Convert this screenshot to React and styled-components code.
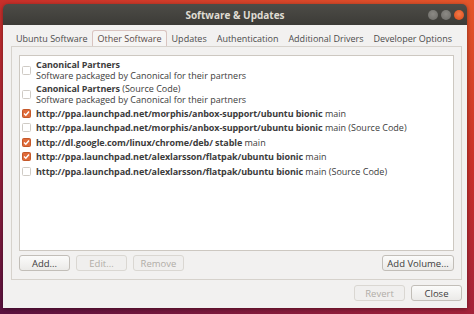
import React from 'react';
import styled, { createGlobalStyle } from 'styled-components';

const GlobalStyle = createGlobalStyle`
  html, body {
    margin: 0;
    padding: 0;
  }
  body {
    width: 474px;
    height: 314px;
    overflow: hidden;
    background: linear-gradient(200deg, #e4562a 0%, #c8302a 35%, #a3223a 65%, #5a1240 100%);
    font-family: "Open Sans", "DejaVu Sans", sans-serif;
  }
`;

const sources = [
  { title: 'Canonical Partners', extra: '', sub: 'Software packaged by Canonical for their partners', checked: false },
  { title: 'Canonical Partners', extra: ' (Source Code)', sub: 'Software packaged by Canonical for their partners', checked: false },
  { url: 'http://ppa.launchpad.net/morphis/anbox-support/ubuntu bionic', rest: ' main', checked: true },
  { url: 'http://ppa.launchpad.net/morphis/anbox-support/ubuntu bionic', rest: ' main (Source Code)', checked: false },
  { url: 'http://dl.google.com/linux/chrome/deb/ stable', rest: ' main', checked: true },
  { url: 'http://ppa.launchpad.net/alexlarsson/flatpak/ubuntu bionic', rest: ' main', checked: true },
  { url: 'http://ppa.launchpad.net/alexlarsson/flatpak/ubuntu bionic', rest: ' main (Source Code)', checked: false },
];

const tabs = ['Ubuntu Software', 'Other Software', 'Updates', 'Authentication', 'Additional Drivers', 'Developer Options'];

function App({ className }) {
  return (
    <Desktop className={className}>
      <GlobalStyle />
      <Window>
        <TitleBar>
          <span />
          <Title>Software &amp; Updates</Title>
          <Controls>
            <Dot />
            <Dot />
            <Dot close />
          </Controls>
        </TitleBar>
        <Content>
          <Tabs>
            {tabs.map(t => (
              <Tab key={t} active={t === 'Other Software'}>
                {t}
              </Tab>
            ))}
          </Tabs>
          <Panel>
            <List>
              {sources.map((s, i) =>
                s.title ? (
                  <Item key={i} tall>
                    <Check checked={s.checked} />
                    <div>
                      <Line>
                        <b>{s.title}</b>
                        {s.extra}
                      </Line>
                      <Line>{s.sub}</Line>
                    </div>
                  </Item>
                ) : (
                  <Item key={i}>
                    <Check checked={s.checked} />
                    <Line>
                      <b>{s.url}</b>
                      {s.rest}
                    </Line>
                  </Item>
                )
              )}
            </List>
            <ButtonRow>
              <Button>Add...</Button>
              <Button disabled>Edit...</Button>
              <Button disabled>Remove</Button>
              <Button wide push>
                Add Volume...
              </Button>
            </ButtonRow>
          </Panel>
          <Footer>
            <Button disabled>Revert</Button>
            <Button>Close</Button>
          </Footer>
        </Content>
      </Window>
    </Desktop>
  );
}

function Check({ checked }) {
  return (
    <Box checked={checked}>
      {checked && (
        <svg width="7" height="7" viewBox="0 0 7 7">
          <path d="M1 3.6 L2.8 5.3 L6 1.5" fill="none" stroke="#fff" strokeWidth="1.4" />
        </svg>
      )}
    </Box>
  );
}

const Desktop = styled.div`
  width: 474px;
  height: 314px;
  box-sizing: border-box;
  padding: 4px 7px 0 3px;
`;

const Window = styled.div`
  width: 464px;
  height: 304px;
  display: flex;
  flex-direction: column;
  border-radius: 5px 5px 0 0;
  overflow: hidden;
  box-shadow: 0 1px 4px rgba(0, 0, 0, 0.4);
`;

const TitleBar = styled.div`
  height: 21px;
  flex: none;
  display: grid;
  grid-template-columns: 1fr auto 1fr;
  align-items: center;
  background: linear-gradient(#4d4c47, #3c3b37);
`;

const Title = styled.span`
  color: #dfdbd2;
  font-size: 10px;
  font-weight: bold;
`;

const Controls = styled.div`
  justify-self: end;
  display: flex;
  gap: 3px;
  padding-right: 3px;
`;

const Dot = styled.span`
  width: 10px;
  height: 10px;
  border-radius: 50%;
  background: ${p => (p.close ? 'radial-gradient(circle at 50% 40%, #f37a4a, #dd4814)' : 'radial-gradient(circle at 50% 40%, #8c8a85, #6b6a66)')};
`;

const Content = styled.div`
  flex: 1;
  display: flex;
  flex-direction: column;
  background: #f2f1f0;
  padding: 5px 5px 0 8px;
  color: #3c3c3c;
`;

const Tabs = styled.div`
  display: flex;
`;

const Tab = styled.div`
  font-size: 9px;
  line-height: 15px;
  padding: 0 4px;
  border: 1px solid ${p => (p.active ? '#d9c4c0' : 'transparent')};
  border-bottom: none;
  border-radius: 3px 3px 0 0;
  color: ${p => (p.active ? '#5a4b48' : '#4c4c4c')};
  background: ${p => (p.active ? '#f6f5f4' : 'transparent')};
  white-space: nowrap;
`;

const Panel = styled.div`
  height: 234px;
  box-sizing: border-box;
  border: 1px solid #d6d2cc;
  padding: 8px 7px 0 7px;
  display: flex;
  flex-direction: column;
`;

const List = styled.div`
  height: 196px;
  flex: none;
  box-sizing: border-box;
  background: #fff;
  border: 1px solid #cdc8c1;
  padding: 2px 0 0 2px;
`;

const Item = styled.div`
  display: flex;
  align-items: center;
  gap: 5px;
  height: ${p => (p.tall ? '24px' : '14.5px')};
`;

const Box = styled.span`
  width: 7px;
  height: 7px;
  flex: none;
  display: flex;
  align-items: center;
  justify-content: center;
  border-radius: 1.5px;
  border: 1px solid ${p => (p.checked ? '#c4582a' : '#cfcbc5')};
  background: ${p => (p.checked ? '#df6b3a' : '#fff')};
`;

const Line = styled.div`
  font-size: 9px;
  line-height: 11px;
  color: #3c3c3c;
  white-space: nowrap;

  b {
    letter-spacing: -0.08px;
  }
`;

const ButtonRow = styled.div`
  display: flex;
  gap: 6px;
  margin-top: 4px;
`;

const Button = styled.button`
  width: ${p => (p.wide ? '72px' : '51px')};
  height: 16px;
  padding: 0;
  margin-left: ${p => (p.push ? 'auto' : '0')};
  font-family: "Open Sans", "DejaVu Sans", sans-serif;
  font-size: 9.5px;
  color: ${p => (p.disabled ? '#b1ada7' : '#3c3c3c')};
  background: ${p => (p.disabled ? '#f0efee' : 'linear-gradient(#fbfbfa, #ebeae8)')};
  border: 1px solid ${p => (p.disabled ? '#dad7d2' : '#c2beb8')};
  border-radius: 3px;
`;

const Footer = styled.div`
  display: flex;
  justify-content: flex-end;
  gap: 6px;
  padding-top: 5px;
`;

export default App;
